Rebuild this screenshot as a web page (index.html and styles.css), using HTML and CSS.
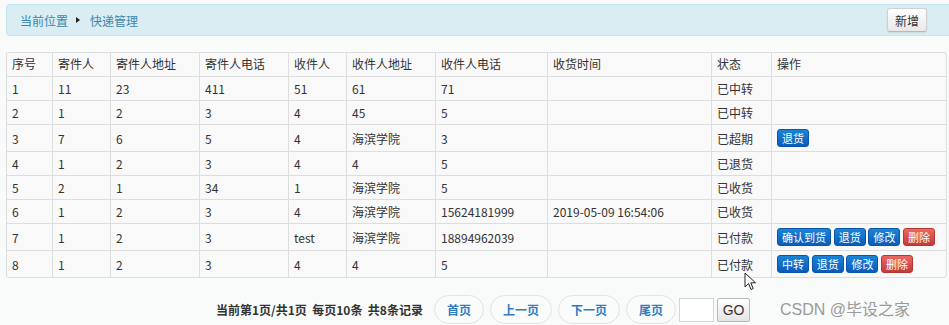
FILE: index.html
```html
<!DOCTYPE html>
<html lang="zh-CN">
<head>
  <meta charset="UTF-8" />
  <title>快递管理</title>
  <link rel="stylesheet" href="styles.css">
</head>
<body>
  <div class="crumb">
    <div class="crumb-path">
      <span>当前位置</span>
      <span class="arrow"></span>
      <span>快递管理</span>
    </div>
    <button class="btn">新增</button>
  </div>

  <table class="list">
    <colgroup>
      <col style="width:46px"><col style="width:58px"><col style="width:89px"><col style="width:89px">
      <col style="width:58px"><col style="width:89px"><col style="width:112px"><col style="width:164px">
      <col style="width:60px"><col style="width:175px">
    </colgroup>
    <thead>
      <tr>
        <th>序号</th><th>寄件人</th><th>寄件人地址</th><th>寄件人电话</th><th>收件人</th>
        <th>收件人地址</th><th>收件人电话</th><th>收货时间</th><th>状态</th><th>操作</th>
      </tr>
    </thead>
    <tbody>
      <tr><td>1</td><td>11</td><td>23</td><td>411</td><td>51</td><td>61</td><td>71</td><td></td><td>已中转</td><td></td></tr>
      <tr><td>2</td><td>1</td><td>2</td><td>3</td><td>4</td><td>45</td><td>5</td><td></td><td>已中转</td><td></td></tr>
      <tr><td>3</td><td>7</td><td>6</td><td>5</td><td>4</td><td>海滨学院</td><td>3</td><td></td><td>已超期</td>
        <td class="ops"><a class="op blue">退货</a></td></tr>
      <tr><td>4</td><td>1</td><td>2</td><td>3</td><td>4</td><td>4</td><td>5</td><td></td><td>已退货</td><td></td></tr>
      <tr><td>5</td><td>2</td><td>1</td><td>34</td><td>1</td><td>海滨学院</td><td>5</td><td></td><td>已收货</td><td></td></tr>
      <tr><td>6</td><td>1</td><td>2</td><td>3</td><td>4</td><td>海滨学院</td><td>15624181999</td><td>2019-05-09 16:54:06</td><td>已收货</td><td></td></tr>
      <tr><td>7</td><td>1</td><td>2</td><td>3</td><td>test</td><td>海滨学院</td><td>18894962039</td><td></td><td>已付款</td>
        <td class="ops"><a class="op blue">确认到货</a> <a class="op blue">退货</a> <a class="op blue">修改</a> <a class="op red">删除</a></td></tr>
      <tr><td>8</td><td>1</td><td>2</td><td>3</td><td>4</td><td>4</td><td>5</td><td></td><td>已付款</td>
        <td class="ops"><a class="op blue">中转</a> <a class="op blue">退货</a> <a class="op blue">修改</a> <a class="op red">删除</a></td></tr>
    </tbody>
  </table>

  <div class="pager">
    <span class="pager-info">当前第1页/共1页&nbsp;&nbsp;每页10条&nbsp;&nbsp;共8条记录</span>
    <a class="pill">首页</a>
    <a class="pill">上一页</a>
    <a class="pill">下一页</a>
    <a class="pill">尾页</a>
    <input type="text" class="page-input" />
    <button class="go">GO</button>
  </div>

  <svg class="cursor" width="13" height="19" viewBox="0 0 13 19">
    <path d="M1 1 L1 15 L4.5 11.5 L7 17.5 L9.2 16.5 L6.8 10.8 L11.5 10.8 Z" fill="#fff" stroke="#222" stroke-width="1"/>
  </svg>
  <div class="watermark">CSDN @毕设之家</div>
</body>
</html>
```

FILE: styles.css
```css
body {
  margin: 0;
  padding: 4px 0 0 6px;
  background: #f8fbfa;
  font-family: "Noto Sans CJK SC", "Open Sans", sans-serif;
  font-size: 12px;
  color: #333;
}
.crumb {
  height: 30px;
  display: flex;
  align-items: center;
  justify-content: space-between;
  padding: 0 22px 0 13px;
  background: #d9edf2;
  border: 1px solid #c4e6ee;
  border-right: none;
  border-radius: 4px 0 0 4px;
  color: #3f86ad;
}
.crumb-path {
  display: flex;
  align-items: center;
  font-size: 12px;
}
.arrow {
  display: inline-block;
  width: 0;
  height: 0;
  margin: 0 10px 0 8px;
  border-top: 3px solid transparent;
  border-bottom: 3px solid transparent;
  border-left: 4px solid #222;
}
.btn {
  width: 40px;
  height: 24px;
  padding: 0;
  font-family: inherit;
  font-size: 12px;
  color: #333;
  background: linear-gradient(#ffffff, #e8e8e8);
  border: 1px solid #d0d0d0;
  border-bottom-color: #b8b8b8;
  border-radius: 3px;
  box-shadow: 0 1px 2px rgba(0,0,0,0.08);
}
.list {
  margin-top: 16px;
  width: 940px;
  table-layout: fixed;
  border-collapse: separate;
  border-spacing: 0;
  border: 1px solid #dddddd;
  border-left: none;
  border-radius: 4px;
  background: #f9f9f9;
}
.list th, .list td {
  border-left: 1px solid #dddddd;
  border-top: 1px solid #dddddd;
  padding: 4px 5px 3px;
  line-height: 16px;
  text-align: left;
  white-space: nowrap;
  overflow: hidden;
}
.list th {
  font-weight: normal;
  border-top: none;
  padding: 3px 5px 4px;
}
.list td.ops {
  padding: 4px 5px 4px 5px;
  line-height: 18px;
}
.op {
  display: inline-block;
  height: 16px;
  line-height: 16px;
  padding: 0 4px;
  color: #fff;
  border-radius: 3px;
  vertical-align: top;
  font-size: 11px;
}
.op.blue {
  background: linear-gradient(#1a84d8, #0b5cba);
  border: 1px solid #0a56ad;
}
.op.red {
  background: linear-gradient(#ec6863, #c33b35);
  border: 1px solid #b8362f;
}
.pager {
  width: 940px;
  margin-top: 17px;
  display: flex;
  align-items: center;
  padding-left: 210px;
  box-sizing: border-box;
}
.pager-info {
  font-weight: bold;
  color: #333;
  margin-right: 5px;
}
.pill {
  height: 27px;
  line-height: 27px;
  padding: 0 12px;
  margin-left: 6px;
  border: 1px solid #e2e4e4;
  border-radius: 15px;
  background: #fafcfc;
  color: #2f7cc0;
  font-weight: bold;
}
.page-input {
  width: 33px;
  height: 22px;
  padding: 0;
  margin-left: 3px;
  border: 1px solid #d4d4d4;
  background: #fff;
}
.go {
  width: 33px;
  height: 24px;
  padding: 0;
  margin-left: 3px;
  font-family: "Liberation Sans", sans-serif;
  font-size: 14px;
  color: #333;
  background: linear-gradient(#ffffff, #e4e4e4);
  border: 1px solid #b8b8b8;
  border-radius: 2px;
}
.cursor {
  position: absolute;
  left: 744px;
  top: 272px;
}
.watermark {
  position: absolute;
  left: 780px;
  top: 296px;
  font-family: "Liberation Sans", "Noto Sans CJK SC", sans-serif;
  font-size: 16px;
  color: #9a9a9a;
}
```
